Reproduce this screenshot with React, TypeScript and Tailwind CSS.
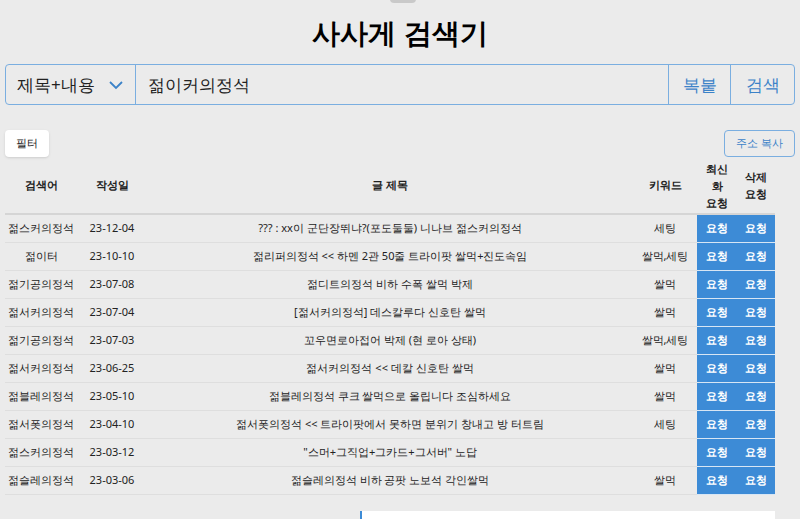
import React from "react";

const rows = [
  ["젊스커의정석", "23-12-04", "??? : xx이 군단장뛰냐?(포도둘둘) 니나브 젊스커의정석", "세팅"],
  ["젊이터", "23-10-10", "젊리퍼의정석 << 하멘 2관 50줄 트라이팟 쌀먹+진도속임", "쌀먹,세팅"],
  ["젊기공의정석", "23-07-08", "젊디트의정석 비하 수폭 쌀먹 박제", "쌀먹"],
  ["젊서커의정석", "23-07-04", "[젊서커의정석] 데스칼루다 신호탄 쌀먹", "쌀먹"],
  ["젊기공의정석", "23-07-03", "꼬우면로아접어 박제 (현 로아 상태)", "쌀먹,세팅"],
  ["젊서커의정석", "23-06-25", "젊서커의정석 << 데칼 신호탄 쌀먹", "쌀먹"],
  ["젊블레의정석", "23-05-10", "젊블레의정석 쿠크 쌀먹으로 올립니다 조심하세요", "쌀먹"],
  ["젊서폿의정석", "23-04-10", "젊서폿의정석 << 트라이팟에서 못하면 분위기 창내고 방 터트림", "세팅"],
  ["젊스커의정석", "23-03-12", "\"스머+그직업+그카드+그서버\" 노답", ""],
  ["젊슬레의정석", "23-03-06", "젊슬레의정석 비하 공팟 노보석 각인쌀먹", "쌀먹"],
];

export default function App() {
  return (
    <div className="w-[800px] h-[519px] overflow-hidden bg-[#ebebeb] text-[#222] font-['Lato','Noto_Sans_CJK_KR',sans-serif] relative">
      <div className="absolute left-[390px] top-[-6px] w-[26px] h-[9px] rounded bg-[#c9c9c9]" />
      <h1 className="text-center text-[28px] font-bold text-black pt-[12px] h-[64px] leading-[40px]">사사게 검색기</h1>
      <div className="mx-[5px] flex h-[41px] border border-[#7aaee0] rounded-sm bg-[#ebebeb] text-[17px]">
        <div className="w-[130px] flex items-center justify-between px-[11px] border-r border-[#7aaee0]">
          <span>제목+내용</span>
          <svg width="16" height="16" viewBox="0 0 16 16" fill="none" stroke="#3b82c8" strokeWidth="1.8"><path d="M2 5l6 6 6-6" /></svg>
        </div>
        <div className="flex-1 flex items-center px-[12px]">젊이커의정석</div>
        <div className="w-[62px] flex items-center justify-center border-l border-[#7aaee0] text-[#3b82c8]">복붙</div>
        <div className="w-[64px] flex items-center justify-center border-l border-[#7aaee0] text-[#3b82c8]">검색</div>
      </div>
      <div className="mx-[5px] mt-[25px] flex justify-between items-center">
        <div className="bg-white rounded px-[11px] h-[27px] flex items-center text-[11px] shadow-sm">필터</div>
        <div className="border border-[#7aaee0] rounded px-[11px] h-[27px] flex items-center text-[11px] text-[#3b82c8]">주소 복사</div>
      </div>
      <table className="mx-[5px] w-[770px] border-collapse text-[11px]">
        <thead>
          <tr className="h-[57px] font-bold border-b-2 border-[#d5d5d5]">
            <th className="w-[72px] font-bold">검색어</th>
            <th className="w-[70px] font-bold">작성일</th>
            <th className="font-bold">글 제목</th>
            <th className="w-[64px] font-bold">키워드</th>
            <th className="w-[40px] font-bold leading-[17px]">최신<br />화<br />요청</th>
            <th className="w-[38px] font-bold leading-[17px]">삭제<br />요청</th>
          </tr>
        </thead>
        <tbody>
          {rows.map((r, i) => (
            <tr key={i} className="h-[28px] border-b border-[#dedede]">
              <td className="text-center">{r[0]}</td>
              <td className="text-center">{r[1]}</td>
              <td className="text-center">{r[2]}</td>
              <td className="text-center">{r[3]}</td>
              <td className="text-center bg-[#3d8bd6] text-white font-bold border-b border-[#d8e6f4]">요청</td>
              <td className="text-center bg-[#3d8bd6] text-white font-bold border-b border-[#d8e6f4]">요청</td>
            </tr>
          ))}
        </tbody>
      </table>
      <div className="ml-[360px] mr-[25px] mt-[16px] h-[20px] bg-white border-l-2 border-[#3d8bd6]" />
    </div>
  );
}
